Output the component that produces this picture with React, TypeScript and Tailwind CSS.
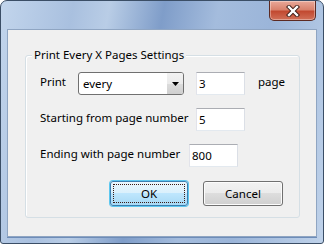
import React from "react";

const font = { fontFamily: '"Segoe UI", "Noto Sans", "Liberation Sans", sans-serif' };

const TextBox = ({ value, width }: { value: string; width: string }) => (
  <div
    className={`${width} h-[23px] bg-white border border-t-[#abadb3] border-l-[#e2e3ea] border-r-[#dbdfe6] border-b-[#e3e9ef] flex items-center pl-[2px] text-[11.5px] text-black`}
  >
    {value}
  </div>
);

const CloseButton = () => (
  <div className="absolute right-[7px] top-0 w-[47px] h-[20px] rounded-b-[5px] border border-t-0 border-[#5c2a22] bg-[linear-gradient(#e9a899,#d9826d_45%,#c24a31_55%,#d17058)] shadow-[inset_0_0_0_1px_rgba(255,255,255,0.35)] flex items-center justify-center">
    <svg width="14" height="12" viewBox="0 0 14 12">
      <path d="M3 2 L11 10 M11 2 L3 10" stroke="#3a1a14" strokeWidth="4.2" strokeLinecap="square" />
      <path d="M3 2 L11 10 M11 2 L3 10" stroke="#ffffff" strokeWidth="2.4" strokeLinecap="square" />
    </svg>
  </div>
);

export default function App() {
  return (
    <div className="w-[324px] h-[244px] bg-white" style={font}>
      <div className="relative w-[324px] h-[244px] rounded-t-[7px] rounded-b-[3px] border border-[#3b4e66] bg-[linear-gradient(100deg,#c2d5ec_0%,#a9c0df_20%,#b9cde6_30%,#7f9dc9_45%,#a4bcdd_60%,#9bb5d9_75%,#bfd2ea_100%)] pt-[28px] px-[6px] pb-[6px] flex flex-col">
        <CloseButton />
        <div className="flex-1 border border-[#8fa5c2] bg-[#f0f0f0] shadow-[0_1px_0_#6d8cb8] flex flex-col">
          {/* group box */}
          <div className="relative ml-[17px] mt-[25px] w-[275px] h-[163px] border border-[#d5dfe5] rounded-[3px] shadow-[inset_1px_1px_0_#ffffff] pt-[16px] pl-[14px] flex flex-col text-[11.5px] text-black">
            <span className="absolute left-[6px] top-[-9px] px-[2px] bg-[#f0f0f0] leading-[16px]">
              Print Every X Pages Settings
            </span>

            <div className="flex items-center h-[23px]">
              <span className="w-[38px] -mt-[4px]">Print</span>
              <div className="w-[106px] h-[23px] rounded-[3px] border border-[#707070] bg-white flex items-center">
                <span className="flex-1 pl-[4px]">every</span>
                <div className="w-[16px] h-[21px] rounded-r-[2px] bg-[linear-gradient(#f2f2f2,#ebebeb_50%,#dddddd_50%,#cfcfcf)] flex items-center justify-center">
                  <svg width="7" height="4" viewBox="0 0 7 4">
                    <path d="M0 0 H7 L3.5 4 Z" fill="#000" />
                  </svg>
                </div>
              </div>
              <div className="ml-[12px]">
                <TextBox value="3" width="w-[49px]" />
              </div>
              <span className="ml-[13px] -mt-[4px]">page</span>
            </div>

            <div className="flex items-center h-[23px] mt-[13px]">
              <span className="w-[156px] -mt-[4px]">Starting from page number</span>
              <TextBox value="5" width="w-[49px]" />
            </div>

            <div className="flex items-center h-[23px] mt-[13px]">
              <span className="w-[149px] -mt-[4px]">Ending with page number</span>
              <TextBox value="800" width="w-[49px]" />
            </div>

            <div className="flex mt-[14px] ml-[70px] gap-[15px]">
              <div className="w-[78px] h-[25px] rounded-[3px] border border-[#3c7fb1] shadow-[0_0_0_1px_#5ec8f0] p-[2px] bg-[linear-gradient(#eaf6fd,#d9f0fc_50%,#bee6fd_50%,#a7d9f5)]">
                <div className="w-full h-full border border-dotted border-[#3a1a14] flex items-center justify-center">
                  OK
                </div>
              </div>
              <div className="w-[80px] h-[25px] rounded-[3px] border border-[#707070] bg-[linear-gradient(#f2f2f2,#ebebeb_50%,#dddddd_50%,#cfcfcf)] shadow-[inset_0_0_0_1px_#fcfcfc] flex items-center justify-center">
                Cancel
              </div>
            </div>
          </div>
        </div>
      </div>
    </div>
  );
}
